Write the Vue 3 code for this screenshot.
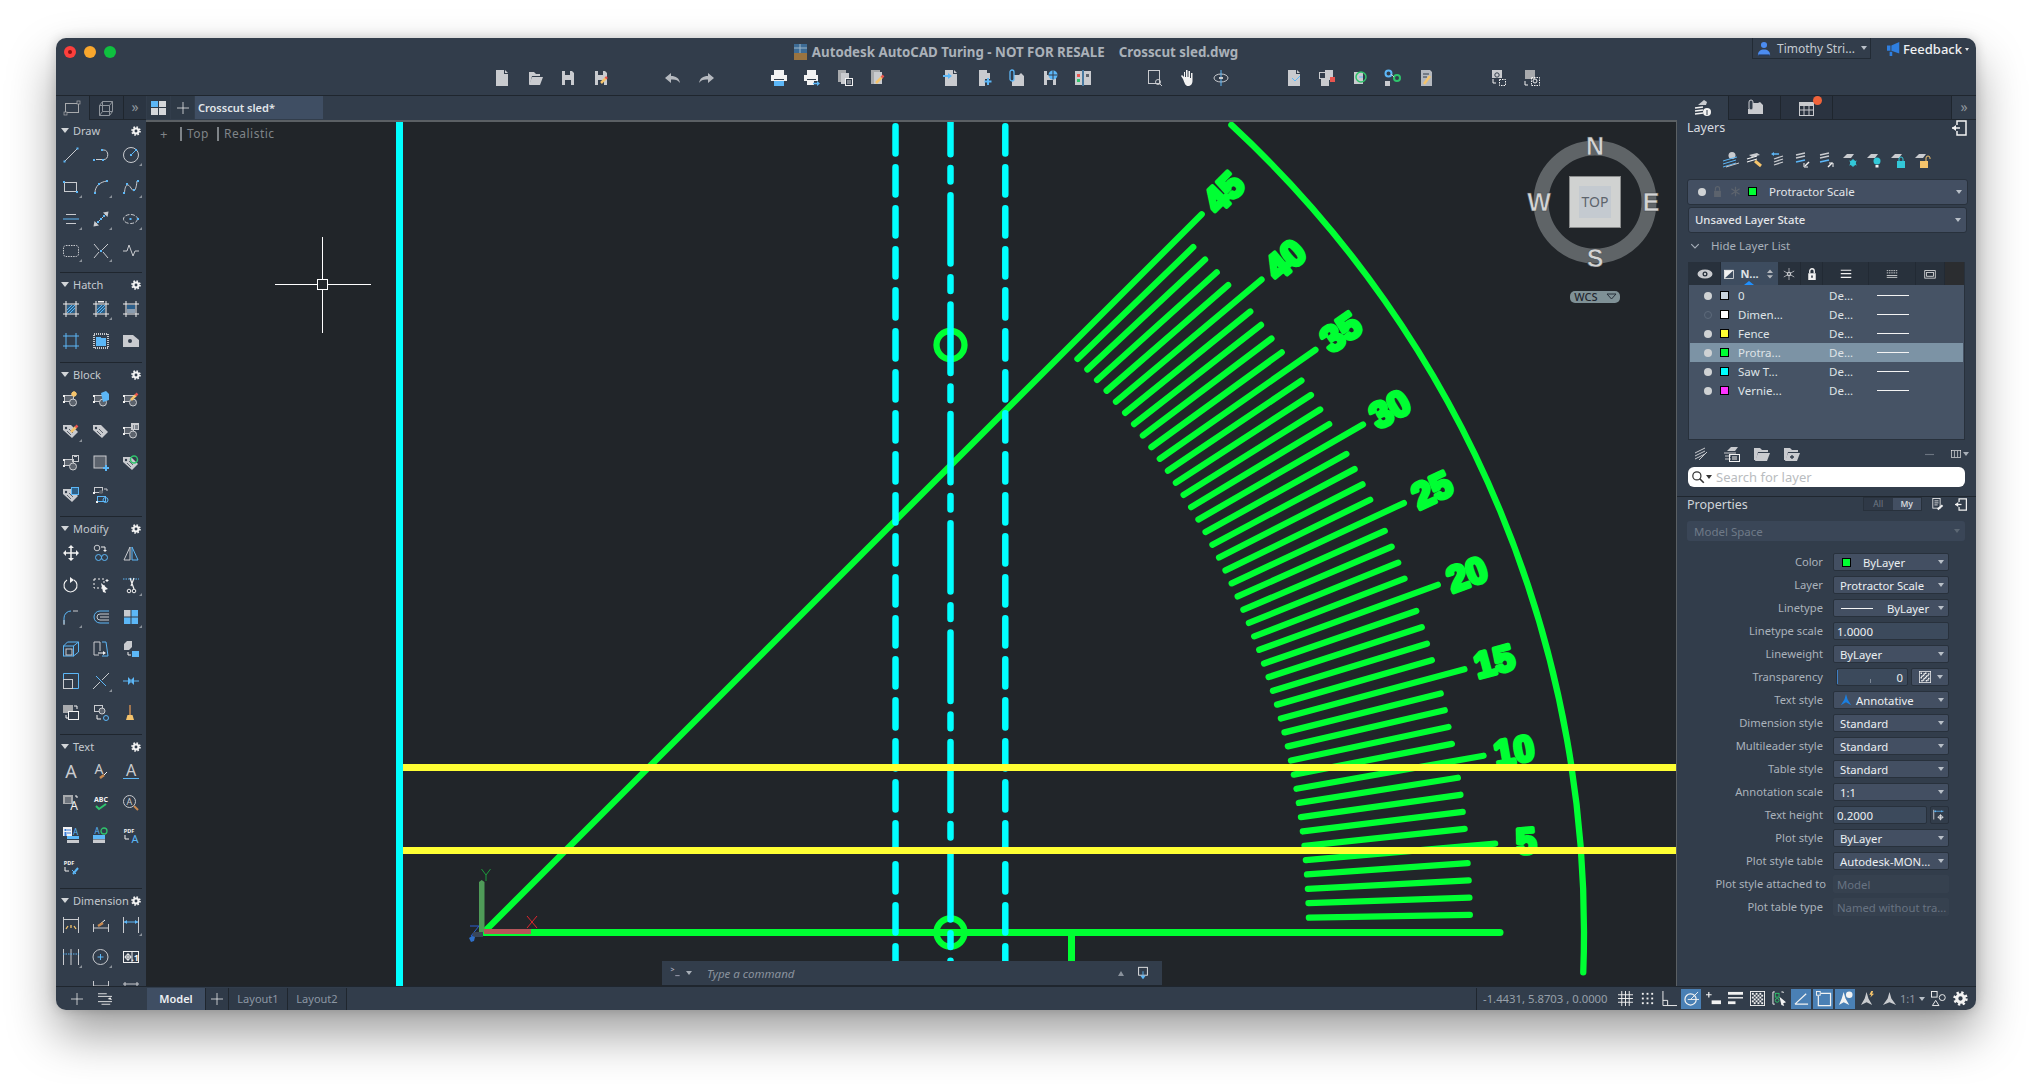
<script setup>
const G = '#c9cbcf', B = '#5cb7f7', W = '#f2f2f2', D = '#323d4b', Y = '#f5c46c', O = '#c98a50', E = '#2fc46c', K = '#5c636d', Rd = '#e8554f'
const FONT = 'Noto Sans, sans-serif'
const p = (d, c = G, w = 1) => `<path d="${d}" fill="none" stroke="${c}" stroke-width="${w}"/>`
const f = (d, c = G) => `<path d="${d}" fill="${c}"/>`
const r = (x, y, w, h, c = G) => `<rect x="${x}" y="${y}" width="${w}" height="${h}" fill="${c}"/>`
const s = (x, y, w, h, c = G, sw = 1, fill = 'none') => `<rect x="${x}" y="${y}" width="${w}" height="${h}" fill="${fill}" stroke="${c}" stroke-width="${sw}"/>`
const o = (x, y, rad, c = G, sw = 1) => `<circle cx="${x}" cy="${y}" r="${rad}" fill="none" stroke="${c}" stroke-width="${sw}"/>`
const c = (x, y, rad, col = G) => `<circle cx="${x}" cy="${y}" r="${rad}" fill="${col}"/>`
const t = (x, y, txt, size, col = G, weight = 400) => `<text x="${x}" y="${y}" font-size="${size}" font-weight="${weight}" font-family="${FONT}" fill="${col}" text-anchor="middle">${txt}</text>`
const dots = (pts, col = B) => pts.map(([x, y]) => r(x - 1, y - 1, 2, 2, col)).join('')
const gear = (col = G) => `<circle cx="8" cy="8" r="6.2" fill="none" stroke="${col}" stroke-width="3" stroke-dasharray="2.4 2.47"/><circle cx="8" cy="8" r="4" fill="none" stroke="${col}" stroke-width="3.4"/>`

const hb = (col = W) => p('M3 0v16M13 0v16M0 3h16M0 13h16', col)
const blk = s(1.5, 4.5, 9, 6, G, 1, K) + dots([[1, 11], [1, 5]], W) + `<circle cx="10" cy="11.5" r="3.5" fill="${K}" stroke="${G}"/>`
const tag = f('M0 2h8l7 7-6 6L0 7z', G) + c(3, 5, 1.2, D) + p('M4 8l4 4M6 6l4 4', K)
const pen = p('M8 9l5-5', Y, 2.5) + p('M12.5 4.5l2-2', Rd, 2.5)
const flop = f('M2 1h10l2 2v12H2z', G) + r(5, 1, 5, 4, D) + r(5, 10, 6, 5, D)
const doc = f('M2 0h8v4h4v12H2z', G) + f('M11 0l3 3h-3z', G)

const I = {
  line: p('M2 14L14 2') + dots([[1.5, 14.5], [14.5, 1.5]]),
  pline: p('M3 12.5h6M10 3h1c5 0 5 9.5 0 9.5') + dots([[1, 13], [10, 13], [9, 3]]),
  circle: o(8, 8, 7.5) + p('M8 8L13 3', B) + dots([[8, 8], [13, 3]]),
  rect: s(1.5, 3.5, 12, 9) + dots([[1, 3], [14, 13]]),
  arc: p('M2 14C2 7 7 3 14 2') + dots([[2, 14], [14, 2], [6, 5]]),
  spline: p('M1.5 14C2 5 5 4 8 9s5 3 6-7') + dots([[1, 14], [4, 5], [11, 11], [15, 2]]),
  xline: p('M3 3.5h10M3 12.5h10') + p('M0 8h16', B),
  darrow: p('M3 13L13 3') + f('M15.5 .5l-1 5.5-4.5-4.5z') + f('M.5 15.5l1-5.5 4.5 4.5z') + dots([[8, 8], [5, 11], [11, 5]]),
  ellipse: `<ellipse cx="7.5" cy="8" rx="7" ry="4.5" fill="none" stroke="${G}" stroke-dasharray="4 1.5"/>` + dots([[7.5, 8], [15, 8]]),
  bound: `<rect x=".5" y="2.5" width="15" height="11" rx="2.5" fill="none" stroke="${G}" stroke-dasharray="1.5 1"/>`,
  xcross: p('M1 1l5 6M10 9l5 6M15 1L9 7M6 9L1 15') + dots([[8, 8]]),
  brk: p('M0 8h4l2-6 4 11 2-5h4'),
  hatch: hb() + r(4, 4, 8, 8, '#2d5f86') + p('M4 9l5-5M4 12l8-8M7 12l5-5', B),
  hatche: hb() + r(4, 4, 8, 8, '#2d5f86') + p('M4 9l5-5M4 12l8-8M7 12l5-5', B) + r(5, 0, 6, 1.5, W),
  grad: hb() + r(4, 4, 8, 4, '#2c5f8b') + r(4, 8, 8, 4, '#8a9caf'),
  bblue: hb(B),
  wipe: `<rect x="1" y="1" width="14" height="14" fill="none" stroke="${G}" stroke-width="2" stroke-dasharray="1 1"/>` + r(3, 5, 10, 8, B) + r(3, 4, 5, 2, B),
  region: f('M0 2h10l6 5v7H0z') + c(7, 8, 2, D),
  bNew: blk + c(11, 3, 2.5, Y) + p('M11 0v6M8 3h6M9 1l4 4M13 1L9 5', Y),
  bBlue: blk + f('M8 2l5-2 3 3v6l-6 2z', B),
  bEdit: blk + pen,
  tEdit: tag + pen,
  tag,
  bAttr: blk + r(8, 0, 8, 7) + r(10, 2.5, 1, 1, D) + r(12, 2.5, 3, 1, D) + r(10, 4.5, 1, 1, D) + r(12, 4.5, 3, 1, D),
  bSave: blk + s(9.5, .5, 6, 6) + r(11, 0, 3, 2),
  bAdd: s(1, 1, 12, 12, G, 1, K) + p('M13 10v6M10 13h6', B, 2),
  tSync: tag + o(11, 4.5, 3.5, E, 1.5),
  tBlue: tag + s(8.5, .5, 7, 7, B, 1, '#2d5f86'),
  bRef: s(1.5, .5, 8, 5) + c(8, 5, 2, K) + p('M11 2h3v2') + s(4.5, 9.5, 8, 5, B) + o(12.5, 13, 2.5, B) + dots([[1, 6], [4, 15]], W),
  move: p('M8 1v14M1 8h14', W, 1.5) + f('M8 0l3 3H5zM8 16l3-3H5zM0 8l3-3v6zM16 8l-3-3v6z', W),
  copy: o(4, 3, 2.8) + p('M8 2h4v3', W) + f('M10 5h4l-2 2z', W) + o(5.5, 12.5, 3, B) + o(11.5, 12.5, 3, B),
  mirror: p('M7 2L1 15h6z') + p('M9 2l6 13H9z', B),
  rotate: p('M11 3a6.5 6.5 0 1 1-7 0', W, 1.1) + f('M7 0v6l4-3z', W),
  scaleSel: `<rect x="1" y="2" width="10" height="9" fill="none" stroke="${W}" stroke-dasharray="2 2"/>` + f('M8 6l7 6-3 1 1 3-3-1z', W) + p('M14 2v3M12.5 3.5h3', W),
  trim: `<path d="M0 2h16" stroke="${B}" stroke-dasharray="1.5 1"/>` + p('M7 1l4 11M11 1L8 9', W, 1.2) + o(6, 14, 1.8, W) + o(11, 14, 1.8, W),
  fillet: p('M1 15V9a7 7 0 0 1 7-7', B) + p('M10 2h5M1 11v5', G),
  offset: p('M16 2H7a6 6 0 0 0 0 12h9', B) + p('M16 5H7a3 3 0 0 0 0 6h9', G) + p('M16 8H7', G),
  array: r(1, 1, 6.5, 6.5) + r(8.5, 1, 6.5, 6.5, B) + r(1, 8.5, 6.5, 6.5, B) + r(8.5, 8.5, 6.5, 6.5, B),
  solid: s(.5, 5, 10, 10, B) + p('M.5 5l4-4h11l-5 4M15.5 1v10l-5 4', B) + s(3, 8, 6, 6, G),
  stretch: p('M6 14H1V1h6v9') + p('M9 1h4l2 14H9', B) + p('M5 12h5', W) + f('M10 10l3 2-3 2z', W),
  lay2: f('M1 3l3-3h5v6l-3 3H1z') + p('M5 11v3h3', W) + r(9, 10, 7, 6, B),
  scale2: s(.5, 6.5, 9, 9) + p('M.5 6V.5h15v15H10', B),
  brk2: p('M0 16L7 9M9 7l7-7') + p('M3 3l10 10', B),
  join: p('M0 8h16', B) + f('M5 4l4 4-4 4zM11 4L7 8l4 4z', B),
  lay3: r(0, 0, 10, 8, '#a8aaad') + s(5.5, 6.5, 10, 8, W, 1, D) + p('M11 1h3v3', W) + p('M3 10v3h2', W),
  bSwap: s(1.5, .5, 8, 6) + c(9, 6, 3, K) + o(9, 6, 3) + p('M4 10v4h4', W) + o(13, 13, 2.5, B),
  purge: p('M7 0v10', O, 1.5) + f('M3 15l1.5-5h5l1.5 5z', Y),
  tA: t(8, 15, 'A', 18, G),
  tA2: t(6, 11, 'A', 14, G) + p('M9 14l5-5', W) + p('M7 15l4-3', O, 2.5),
  tA3: t(8, 13, 'A', 16, G) + r(0, 15, 16, 1, B),
  tImp: r(0, 0, 10, 9, '#a8aaad') + p('M2 3h6M2 5h6M2 7h6', D) + t(11, 15, 'A', 12, W) + p('M12 1h2v2', W),
  spell: t(8, 7, 'ABC', 7, W, 700) + p('M3 11l3 3 7-5', E, 2),
  find: o(6.5, 6.5, 6) + t(6.5, 10, 'A', 9, G) + p('M11 11l4 4', O, 2),
  tList: r(0, 0, 9, 9, W) + dots([[2.5, 3], [2.5, 6], [2.5, 8]], '#3a7bd5') + r(4, 2.5, 4, 1, '#3a7bd5') + r(4, 5.5, 4, 1, '#3a7bd5') + t(12.5, 8, 'A', 8, B) + r(4, 9, 12, 3, B) + r(4, 13, 12, 3),
  tSync2: t(4, 7, 'A', 8, B) + o(11, 4, 3, E, 1.3) + r(0, 8, 12, 4, B) + r(0, 12.5, 12, 3.5),
  pdfA: t(6, 5.5, 'PDF', 5.5, W, 700) + p('M2 8v4h4', W) + t(12, 15.5, 'A', 11, B),
  pdfT: t(6, 5.5, 'PDF', 5.5, W, 700) + p('M2 8v4h4', W) + p('M10 15l5-6', B, 2) + p('M9 11l4 4', B, 1),
  dSmart: p('M.5 0v16M15.5 0v16M0 2.5h16', G) + `<path d="M3 12l2-3M8 11V8M13 12l-2-3" stroke="${Y}" stroke-width="1.3" fill="none"/>`,
  dPen: p('M.5 7v8M15.5 7v8M0 11h16', G) + p('M6 8l6-5', W) + p('M5 9l5-3', O, 2.5),
  dLin: p('M.5 0v16M15.5 0v16', G) + p('M1 5h14', B) + f('M1 5l3-2v4zM15 5l-3-2v4z', B),
  dBase: p('M.5 0v16M8 0v16M15.5 0v16', G) + `<path d="M0 5h16" stroke="${B}" stroke-dasharray="1.5 1"/>`,
  dRad: o(7.5, 8, 7.5) + p('M7.5 5v6M4.5 8h6', B),
  dTol: s(.5, 2.5, 15, 11, W) + p('M9 2v12', W) + t(12, 12, '.1', 9, W, 700) + o(5, 8, 2.5, W) + p('M5 4v8M1.5 8h7', W),
  d7: p('M1 6v10M8 6v4M10 12h2M15 10v2', G),
  d8: p('M.5 0v9M15.5 0v9M0 5h16', G),
  d9: p('M2 1v4M14 1v4M0 3h16') + r(6, 5, 4, 3, Y),
  add: p('M8 0v16M0 8h16', W),
  stack: p('M0 2h10M0 5h16M0 11h16M4 14h10', W) + f('M11 8l3-2 2 3z', W),
  new: doc,
  open: f('M2 2h5l2 2h4v2H5l-2 8H2z', G) + f('M5 7h11l-3 8H2z', G),
  save: flop,
  saveas: flop + p('M8 13l5-5', Y, 2.5) + p('M12.5 8.5l1.5-1.5', Rd, 2.5),
  undo: f('M6 3v3c5 0 8 2 9 7-2-3-5-4-9-3.5V13L0 8z', '#b5b9bf'),
  redo: f('M10 3v3C5 6 2 8 1 13c2-3 5-4 9-3.5V13l6-5z', '#b5b9bf'),
  plot: r(3, 0, 10, 5, W) + r(0, 5, 16, 6, W) + r(3, 11, 10, 5, B) + r(3, 9, 10, 1, D),
  publish: r(3, 0, 9, 5, W) + r(0, 5, 14, 6, W) + r(3, 11, 7, 4, W) + r(3, 9, 9, 1, D) + p('M9 13.5h5', B, 1.5) + f('M13 11l3 2.5-3 2.5z', B),
  batch: r(1, 0, 8, 12, '#a8aaad') + r(4, 3, 8, 11, G) + s(8.5, 8.5, 7, 7, W, 1, D) + p('M10 11h4M10 13h4', G),
  page: r(1, 0, 9, 14, '#a8aaad') + r(4, 2, 8, 12, G) + p('M6 13l6-6', Y, 2.5) + p('M11.5 7.5l2-2', Rd, 2.5),
  docin: doc + p('M0 6h6', B, 2) + f('M5 3l4 3-4 3z', B),
  docadd: f('M3 0h8v3h3v6H9v7H3z') + p('M12 8v7M8.5 11.5h7', B, 2),
  docclip: f('M5 5h5l2-2 3 3v10H3V5z') + `<rect x="1" y="0" width="4" height="11" rx="2" fill="${D}" stroke="${B}" stroke-width="1.3"/>`,
  web: flop + c(11, 5, 4.5, B) + p('M6.5 5h9M11 .5v9', D),
  compare: r(0, 1, 7, 14) + r(9, 1, 7, 14) + r(2, 4, 3, 3, Rd) + r(2, 9, 3, 3, E) + p('M8 0v16', B) + r(11, 4, 3, 3, K),
  zoomw: s(1.5, .5, 11, 13, G) + o(11, 12, 2.5, G) + p('M13 14l2 2'),
  pan: f('M3 9l-2-3 1-1 2 2V2h1v5h1V0h1.5v7h1V1H10v7h1V3h1.5v8c0 3-2 5-4.5 5S5 14 3 9z', W),
  orbit: `<ellipse cx="8" cy="8" rx="7" ry="4" fill="none" stroke="${G}"/>` + p('M8 0v16', B) + r(6, 7, 4, 2, G),
  m1: doc + p('M6 8l3 3 5-5', B),
  m2: s(.5, 2.5, 6, 6) + r(6, 0, 8, 10) + r(2, 9, 8, 7) + r(11, 7, 5, 5, Rd),
  m3: r(2, 2, 9, 12) + o(9, 7, 5, E, 1.5) + p('M7 7h4', B),
  m4: o(3.5, 3.5, 3, B, 2) + o(12, 8, 3, E, 2) + r(0, 11, 5, 5) + p('M6 4l3 3', G),
  m5: f('M3 0h9l2 2v14H3z', '#b5b9bf') + p('M6 14l6-8', Y, 2.5) + p('M5 4h6M5 7h4', D),
  m6: r(1, 0, 10, 8) + o(6, 5, 2.2, D) + p('M2 9v4h3', W) + `<rect x="8.5" y="9.5" width="6" height="6" fill="none" stroke="${W}" stroke-dasharray="1.5 1"/>`,
  m7: r(1, 0, 10, 9, '#a8aaad') + p('M1 11v4h3', W) + `<rect x="7.5" y="7.5" width="8" height="8" fill="none" stroke="${W}" stroke-dasharray="1.5 1"/>` + o(11, 11, 2, W),
  user: c(8, 4, 3.5, '#4c8cf0') + f('M1 16c0-5 3-7 7-7s7 2 7 7z', '#4c8cf0') + p('M1.5 15.5h13', '#111'),
  mega: f('M0 4h4v6H0zM5 4l9-4v13l-9-3zM3 11h3v5H3z', '#2f7fe0'),
  layers1: p('M0 8l8-1M0 11l8-1M0 14l8-1', W, 1.5) + f('M3 5l6-5 3 2-1 3z', G) + c(12, 12, 4, W) + r(11.5, 10, 1, 5, D),
  clipdoc: f('M6 3h5l2-1 3 3v9H1V9h5z') + `<rect x="2" y="0" width="4" height="10" rx="2" fill="${D}" stroke="${G}"/>`,
  cal: r(0, 2, 15, 3) + s(.5, 5.5, 14, 10) + p('M5 6v9M10 6v9M1 10h13'),
  export: p('M5 5V1h9v14H5v-4', W, 1.5) + p('M0 8h8', W, 1.5) + f('M0 8l4-3v6z', W),
  lay1: c(9, 3.5, 3.5) + p('M0 9l10-3 4-1M0 12l13-4M0 15l13-4', B) + p('M3 15l13-4', G),
  lay2t: f('M2 3l8-2 3 2-8 2z') + p('M0 7l10-3M0 10l10-3', W, 1.3) + p('M8 9l6 5', Y, 3),
  lay3t: p('M3 7l9-3M3 10l9-3M3 13l9-3', G, 1.3) + p('M8 2H2', B, 1.5) + f('M0 2l3-2v4z', B),
  lay4t: p('M1 3l9-2M1 6l9-2', G, 1.3) + p('M1 10l9-2', B, 1.5) + p('M10 14l4-4', W, 1.5) + p('M9 11v4h4', W),
  lay5t: p('M1 3l9-2M1 6l9-2', G, 1.3) + p('M1 10l9-2', B, 1.5) + p('M9 15l4-4', W, 1.5) + p('M10 11h4v4', W),
  lay6t: f('M0 6l4-4h7L8 6z') + c(10, 11, 3, '#33c8d8') + p('M10 7v8M6.5 9l7 4M6.5 13l7-4', '#33c8d8'),
  lay7t: f('M0 6l4-4h7L8 6z') + c(10, 9, 3.5, '#33c8d8') + r(8.5, 13, 3, 2.5, W),
  lay8t: f('M0 6l4-4h7L8 6z') + r(6, 9, 8, 7, '#33c8d8') + p('M8 9V7a2 2 0 0 1 4 0v2', '#33c8d8'),
  lay9t: f('M0 6l4-4h7L8 6z') + r(5, 9, 8, 7, Y) + p('M11 9V6a2 2 0 0 1 4 0v1', Y),
  eye: `<ellipse cx="8" cy="8" rx="7.5" ry="4.5" fill="${G}"/>` + c(8, 8, 2.5, '#28313c') + c(8, 8, 1.2, G),
  half: s(2, 3, 12, 11, W, 1) + f('M2 14V3h12z', W),
  updown: f('M8 2l4 4.5H4zM8 14l4-4.5H4z', '#b5b9bf'),
  snow: p('M8 0v16M1 4l14 8M15 4L1 12') + c(8, 8, 3, G) + c(8, 8, 1.2, '#28313c'),
  lock: r(3, 7, 10, 9, W) + p('M5 7V4a3 3 0 0 1 6 0v3', W, 1.8) + r(7, 10, 2, 3, '#28313c'),
  lines3: p('M1 3h14M1 7.5h14M1 12.5h14', W, 1.6),
  lines4: `<path d="M1 3.5h14M1 6.5h14" stroke="${W}" stroke-dasharray="2 1"/>` + p('M1 10h14M1 12.5h14', W),
  plotbox: s(1, 3.5, 14, 10, W) + s(3.5, 6, 9, 5, W),
  lockd: r(3, 7, 10, 9, K) + p('M5 7V4a3 3 0 0 1 6 0v3', K, 1.8),
  snowd: p('M8 1v14M2 4l12 8M14 4L2 12', K, 1.8),
  lsBase: p('M1 7l10-5M1 10l10-5M1 13l10-5') + p('M5 14l8-8', G),
  lsFilter: f('M3 5l4-4h7l-3 4z') + p('M0 7h12M1 10h6M1 13h6') + s(5.5, 8.5, 10, 7, W) + p('M8 11h5M8 13h5', W),
  fopen: f('M0 2h6l2 2h6v2H4L2 14H0z') + f('M4 7h12l-3 8H1z'),
  fstar: f('M0 2h6l2 2h6v2H4L2 14H0z') + f('M4 7h12l-3 8H1z') + p('M8 9v4M6 11h4', D, 1.3),
  minus: r(0, 7, 16, 2, '#6b7480'),
  cols: s(.5, 2.5, 15, 11, W) + p('M5.5 3v10M10.5 3v10', W),
  search: o(6, 6, 5, '#333', 1.5) + p('M9.5 9.5l5 5', '#333', 2),
  pedit: s(1, .5, 9, 12, W) + p('M3 3.5h5M3 6h5M3 8.5h4', W) + p('M7 14l6-5', W, 2.5),
  swatchgrid: s(.5, .5, 15, 15, W) + [2, 5, 8, 11].map(x => [2, 5, 8, 11].map(y => (x + y) % 2 === 0 ? r(x, y, 2, 2, W) : r(x + 1, y + 1, 2, 2, W)).join('')).join(''),
  anno: f('M8 0l2 7 5 8-7-4-7 4 5-8z', '#1b7fe0'),
  theight: p('M1 1v13', W) + p('M1 3h13', B) + f('M2 3l2-1.5v3zM13 3l-2-1.5v3z', B) + o(10, 11, 2.5, W) + p('M10 7v8M6 11h8', W),
  grid: p('M4 0v16M8 0v16M12 0v16M0 4h16M0 8h16M0 12h16', W),
  sDots: [2, 7, 12].map(x => [2, 7, 12].map(y => r(x, y, 2, 2, W)).join('')).join(''),
  sOrtho: p('M1 0v15.5h15M1 10h5v5', W),
  sPolar: o(7, 9, 6, W, 1.3) + p('M7 9l8-8', W) + p('M4 9h12', W),
  sLW: p('M0 4h6M3 1v6', W, 1.3) + r(6, 10, 10, 4, W),
  sLines: r(0, 1, 16, 3, W) + r(0, 6.5, 16, 1.5, W) + r(0, 11, 8, 3, W),
  sCheck: s(.5, .5, 15, 15, W) + Array.from({ length: 6 }, (_, x) => Array.from({ length: 6 }, (_, y) => (x + y) % 2 ? '' : r(2 + x * 2, 2 + y * 2, 2, 2, W)).join('')).join(''),
  sSel: p('M3 1H1v13h2M10 1h2v1', W) + s(3.5, 2.5, 4, 4, E) + o(5.5, 10, 2, E) + f('M8 6l7 6-3 1 1 3-3-1z', W),
  sAng: p('M1 14h14M1 14L13 3', W, 1.3),
  sBox: s(.5, .5, 4, 4, W) + p('M5 2.5h10.5V15.5H2.5V5', W, 1.3),
  sAnno: f('M6 1l2 7 4 7-6-3-5 3 3-7z', W) + c(12, 4, 3.5, W),
  sAnno2: f('M7 1l2 7 4 7-6-3-6 3 4-7z', G) + f('M12 0l-2 4h2l-1 3 4-4h-2l1-3z', Y),
  sAnno3: f('M8 1l2 7 5 7-7-3-7 3 5-7z', G),
  sShapes: s(.5, .5, 6, 6, W) + o(12, 7, 3.2, W) + p('M5 10l3.5 5.5h-7z', W),
  sGear: gear(W),
  gearS: gear(W),
  cmd: t(3, 7, '&gt;', 8, '#aab', 700) + p('M6 11h5', '#aab'),
  cmdPin: s(3, 1.5, 10, 9, W) + p('M8 6v8', B) + f('M5 11h6l-3 4z', B),
  chev: p('M2 5l6 6 6-6', '#a8b0ba', 1.8),
}

const sections = [
  { title: 'Draw', rows: ['line', 'pline', 'circle*', 'rect*', 'arc*', 'spline*', 'xline*', 'darrow*', 'ellipse*', 'bound*', 'xcross*', 'brk'] },
  { title: 'Hatch', rows: ['hatch', 'hatche*', 'grad', 'bblue', 'wipe', 'region'] },
  { title: 'Block', rows: ['bNew', 'bBlue', 'bEdit', 'tEdit*', 'tag', 'bAttr', 'bSave', 'bAdd', 'tSync', 'tBlue', 'bRef'] },
  { title: 'Modify', rows: ['move', 'copy', 'mirror', 'rotate', 'scaleSel', 'trim*', 'fillet*', 'offset', 'array*', 'solid', 'stretch', 'lay2', 'scale2', 'brk2*', 'join', 'lay3', 'bSwap', 'purge'] },
  { title: 'Text', rows: ['tA', 'tA2', 'tA3', 'tImp', 'spell', 'find', 'tList', 'tSync2', 'pdfA', 'pdfT'] },
  { title: 'Dimension', rows: ['dSmart', 'dPen', 'dLin*', 'dBase*', 'dRad*', 'dTol', 'd7', 'd8', 'd9'] },
]
const toolGroups = [
  ['new', 'open', 'save', 'saveas'], ['undo', 'redo'], ['plot', 'publish', 'batch', 'page'],
  ['docin', 'docadd', 'docclip', 'web', 'compare'], ['zoomw', 'pan', 'orbit'], ['m1', 'm2', 'm3', 'm4', 'm5'], ['m6', 'm7'],
]
const layerTools = ['lay1', 'lay2t', 'lay3t', 'lay4t', 'lay5t', 'lay6t', 'lay7t', 'lay8t', 'lay9t']
const layers = [
  { n: '0', c: '#c8d3dc' }, { n: 'Dimen...', c: '#ffffff', off: true }, { n: 'Fence', c: '#ffff33' },
  { n: 'Protra...', c: '#00ff33', sel: true }, { n: 'Saw T...', c: '#00ffff' }, { n: 'Vernie...', c: '#ff33ff' },
]
const propRows = [
  { l: 'Color', k: 'color', v: 'ByLayer' }, { l: 'Layer', k: 'sel', v: 'Protractor Scale' },
  { l: 'Linetype', k: 'ltype', v: 'ByLayer' }, { l: 'Linetype scale', k: 'input', v: '1.0000' },
  { l: 'Lineweight', k: 'sel', v: 'ByLayer' }, { l: 'Transparency', k: 'trans', v: '0' },
  { l: 'Text style', k: 'tstyle', v: 'Annotative' }, { l: 'Dimension style', k: 'sel', v: 'Standard' },
  { l: 'Multileader style', k: 'sel', v: 'Standard' }, { l: 'Table style', k: 'sel', v: 'Standard' },
  { l: 'Annotation scale', k: 'sel', v: '1:1' }, { l: 'Text height', k: 'theight', v: '0.2000' },
  { l: 'Plot style', k: 'sel', v: 'ByLayer' }, { l: 'Plot style table', k: 'sel', v: 'Autodesk-MON...' },
  { l: 'Plot style attached to', k: 'dis', v: 'Model', over: true }, { l: 'Plot table type', k: 'dis', v: 'Named without tra...' },
]
const statusIcons = [
  { n: 'grid' }, { n: 'sDots' }, { n: 'sOrtho' }, { n: 'sPolar', on: true }, { n: 'sLW' }, { n: 'sLines' },
  { n: 'sCheck' }, { n: 'sSel' }, { n: 'sAng', on: true }, { n: 'sBox', on: true }, { n: 'sAnno', on: true },
  { n: 'sAnno2' }, { n: 'sAnno3' },
]
const ORIGIN = { x: 484, y: 932 }
const rad = a => (a * Math.PI) / 180
const polar = (a, d) => ({ x: ORIGIN.x + d * Math.cos(rad(a)), y: ORIGIN.y - d * Math.sin(rad(a)) })
const ticks = Array.from({ length: 44 }, (_, i) => {
  const a = i + 1
  const from = polar(a, 825), to = polar(a, a % 5 === 0 ? 1015 : 986)
  return { a, x1: from.x, y1: from.y, x2: to.x, y2: to.y }
})
const diag = polar(45, 1015)
const labels = [5, 10, 15, 20, 25, 30, 35, 40, 45].map(a => ({ a, ...polar(a, 1046) }))
const arcStart = polar(47.2, 1100), arcEnd = polar(-2.1, 1100)
const arcPath = `M${arcStart.x} ${arcStart.y}A1100 1100 0 0 1 ${arcEnd.x} ${arcEnd.y}`
</script>

<template>
  <div class="page">
    <div class="window">
      <header class="titlebar">
        <div class="title-row">
          <div class="lights">
            <span class="light red"><i></i></span><span class="light amber"></span><span class="light green"></span>
          </div>
          <div class="title">
            <svg class="app-logo" viewBox="0 0 13 16"><rect width="13" height="9" fill="#3d6c96"/><rect y="9" width="13" height="7" fill="#9a7440"/><path d="M6 0v9M0 4h13" stroke="#9fb7c9" fill="none"/></svg>
            <span>Autodesk AutoCAD Turing - NOT FOR RESALE</span><span class="title-file">Crosscut sled.dwg</span>
          </div>
          <div class="account">
            <div class="user">
              <svg class="ico" viewBox="0 0 16 16" v-html="I.user"></svg>
              <span class="user-name">Timothy Stri...</span><i class="caret"></i>
            </div>
            <div class="feedback">
              <svg class="ico" viewBox="0 0 16 16" v-html="I.mega"></svg>
              <span>Feedback</span><i class="caret tiny"></i>
            </div>
          </div>
        </div>
        <div class="toolbar">
          <div v-for="(g, gi) in toolGroups" :key="gi" class="tool-group">
            <span v-for="n in g" :key="n" class="tool"><svg class="ico" viewBox="0 0 16 16" v-html="I[n]"></svg></span>
          </div>
        </div>
      </header>

      <div class="body">
        <aside class="palette">
          <div class="pal-tabs">
            <span class="pal-tab on"><svg class="ico" viewBox="0 0 16 16"><rect x="1.5" y="3.5" width="13" height="9" fill="none" stroke="#a8aaad"/><rect x="0" y="12" width="3" height="3" fill="#323d4b" stroke="#a8aaad" stroke-width=".7"/><rect x="13" y="1" width="3" height="3" fill="#323d4b" stroke="#a8aaad" stroke-width=".7"/></svg></span>
            <span class="pal-tab"><svg class="ico" viewBox="0 0 16 16"><path d="M1.5 5.5h10v10h-10zM1.5 5.5l3-4h10v10l-3 4M11.5 5.5l3-4M4.500 1.5v10h10M1.5 15.5l3-4" fill="none" stroke="#8f959c"/></svg></span>
            <span class="pal-tab more">»</span>
          </div>
          <section v-for="(sec, si) in sections" :key="sec.title" class="pal-sec" :class="{ first: si === 0 }">
            <div class="pal-head">
              <i class="tri"></i><span class="pal-title">{{ sec.title }}</span>
              <svg class="pal-gear" viewBox="0 0 16 16" v-html="I.gearS"></svg>
            </div>
            <div class="pal-grid">
              <span v-for="n in sec.rows" :key="n" class="pal-cell">
                <svg class="ico" viewBox="0 0 16 16" v-html="I[n.replace('*', '')]"></svg>
                <i v-if="n.endsWith('*')" class="fly"></i>
              </span>
            </div>
          </section>
        </aside>

        <main class="center">
          <div class="doc-tabs">
            <span class="doc-ctl">
              <span class="squares"><i class="sq-b"></i><i></i><i></i><i></i></span>
            </span>
            <span class="doc-ctl"><svg class="add-ico" viewBox="0 0 16 16" v-html="I.add"></svg></span>
            <span class="doc-tab">Crosscut sled*</span>
          </div>
          <div class="canvas">
            <svg class="drawing" viewBox="146 122 1530 864" width="1530" height="864">
              <g stroke="#00ff33" stroke-width="6.3" stroke-linecap="round" fill="none">
                <line v-for="l in ticks" :key="l.a" :x1="l.x1" :y1="l.y1" :x2="l.x2" :y2="l.y2" />
                <line :x1="ORIGIN.x" :y1="ORIGIN.y" :x2="diag.x" :y2="diag.y" />
                <path :d="arcPath" />
                <line x1="484" y1="932.5" x2="1500" y2="932.5" stroke-width="7" />
                <line x1="1071.5" y1="936" x2="1071.5" y2="965" stroke-width="7" stroke-linecap="butt" />
                <circle cx="950.5" cy="345" r="14" />
                <circle cx="950.5" cy="932.5" r="14" />
              </g>
              <g fill="#00ff33" stroke="#00ff33" stroke-width="4" stroke-linejoin="round" class="deg">
                <text v-for="l in labels" :key="l.a" :transform="`translate(${l.x} ${l.y}) rotate(${-l.a})`" text-anchor="middle" dominant-baseline="central">{{ l.a }}</text>
              </g>
              <g stroke="#00ffff" stroke-linecap="round" fill="none">
                <line x1="399.5" y1="122" x2="399.5" y2="986" stroke-width="7" stroke-linecap="butt" />
                <line x1="895.5" y1="122" x2="895.5" y2="986" stroke-width="6.5" stroke-dasharray="27.33 13.67" stroke-dashoffset="-4.25" />
                <line x1="1005.3" y1="122" x2="1005.3" y2="986" stroke-width="6.5" stroke-dasharray="27.33 13.67" stroke-dashoffset="-4.25" />
                <line x1="950.5" y1="122" x2="950.5" y2="986" stroke-width="6.5" stroke-dasharray="68.33 13.67 13.67 13.67" stroke-dashoffset="-73.25" />
              </g>
              <g fill="#ffff33">
                <rect x="403" y="764" width="1274" height="7" />
                <rect x="403" y="847" width="1274" height="7" />
              </g>
              <g class="ucs">
                <rect x="479" y="882" width="5.5" height="50" fill="#4f9b58" />
                <path d="M479 882l2.7-2 2.8 2z" fill="#4f9b58" />
                <path d="M481.5 869l4.5 6 4.5-6M486 875v6" stroke="#1c9a3c" fill="none" />
                <rect x="484" y="929" width="47" height="5" fill="#b5555a" />
                <path d="M527 916l10 12M537 916l-10 12" stroke="#e0262e" fill="none" />
                <path d="M470 926h9l-8 10h7" stroke="#2a5fd0" fill="none" />
                <rect x="473" y="932" width="10" height="5" fill="#3a4658" />
                <path d="M469 938l3-2 3 1-1 4-3 1z" fill="#2f6fc8" />
              </g>
              <g stroke="#ffffff" fill="none">
                <path d="M322.5 237v42M322.5 289v44M275 284.5h42M328 284.5h43" />
                <rect x="317.5" y="279.5" width="10" height="10" />
              </g>
              <g class="cube">
                <circle cx="1595" cy="202" r="54" fill="none" stroke="#5f6467" stroke-width="15" />
                <rect x="1569.5" y="176.5" width="51" height="51" fill="#d0d2d1" stroke="#8a8c8c" />
                <rect x="1579" y="186" width="32" height="32" fill="#c4cad0" />
                <text x="1595" y="207" text-anchor="middle" class="top-face">TOP</text>
                <text x="1595" y="155" text-anchor="middle" class="dir">N</text>
                <text x="1595" y="267" text-anchor="middle" class="dir">S</text>
                <text x="1539" y="211" text-anchor="middle" class="dir">W</text>
                <text x="1651" y="211" text-anchor="middle" class="dir">E</text>
                <rect x="1570" y="291" width="50" height="12" rx="5" fill="#7f9196" />
                <text x="1586" y="301" text-anchor="middle" class="wcs">WCS</text>
                <path d="M1607 294h9l-4.5 5z" fill="none" stroke="#27303a" />
              </g>
            </svg>
            <div class="vp-label">
              <span class="vp-plus">+</span><span class="vp-sep">Top</span><span class="vp-sep">Realistic</span>
            </div>
            <div class="cmdline">
              <svg class="ico cmd-ico" viewBox="0 0 16 16" v-html="I.cmd"></svg><i class="caret micro"></i>
              <span class="cmd-text">Type a command</span>
              <i class="caret up"></i>
              <svg class="ico cmd-pin" viewBox="0 0 16 16" v-html="I.cmdPin"></svg>
            </div>
          </div>
        </main>

        <aside class="panel">
          <div class="panel-tabs">
            <span class="ptab on"><svg class="ico" viewBox="0 0 16 16" v-html="I.layers1"></svg></span>
            <span class="ptab"><svg class="ico" viewBox="0 0 16 16" v-html="I.clipdoc"></svg></span>
            <span class="ptab"><svg class="ico" viewBox="0 0 16 16" v-html="I.cal"></svg><i class="notif"></i></span>
            <span class="ptab fill"></span>
            <span class="ptab end">»</span>
          </div>
          <div class="p-head">
            <span>Layers</span>
            <svg class="ico" viewBox="0 0 16 16" v-html="I.export"></svg>
          </div>
          <div class="layer-tools">
            <span v-for="n in layerTools" :key="n" class="ltool"><svg class="ico" viewBox="0 0 16 16" v-html="I[n]"></svg></span>
          </div>
          <div class="dd dd-layer">
            <i class="ldot"></i>
            <svg class="mini" viewBox="0 0 16 16" v-html="I.lockd"></svg>
            <svg class="mini" viewBox="0 0 16 16" v-html="I.snowd"></svg>
            <i class="swatch" style="background:#00ff33"></i>
            <span class="dd-text">Protractor Scale</span><i class="caret"></i>
          </div>
          <div class="dd dd-state"><span class="dd-text">Unsaved Layer State</span><i class="caret"></i></div>
          <div class="hide-row">
            <svg class="chev" viewBox="0 0 16 16" v-html="I.chev"></svg><span>Hide Layer List</span>
          </div>
          <div class="ltable">
            <div class="lhead">
              <span class="lh dark"><svg class="ico" viewBox="0 0 16 16" v-html="I.eye"></svg></span>
              <span class="lh name">
                <svg class="sm" viewBox="0 0 16 16" v-html="I.half"></svg><b>N...</b>
                <svg class="sm" viewBox="0 0 16 16" v-html="I.updown"></svg><i class="sort"></i>
              </span>
              <span class="lh dark"><svg class="sm" viewBox="0 0 16 16" v-html="I.snow"></svg></span>
              <span class="lh dark"><svg class="sm" viewBox="0 0 16 16" v-html="I.lock"></svg></span>
              <span class="lh dark"><svg class="sm" viewBox="0 0 16 16" v-html="I.lines3"></svg></span>
              <span class="lh dark"><svg class="sm" viewBox="0 0 16 16" v-html="I.lines4"></svg></span>
              <span class="lh dark"><svg class="sm" viewBox="0 0 16 16" v-html="I.plotbox"></svg></span>
              <span class="lh blank"></span>
            </div>
            <div class="lbody">
              <div v-for="l in layers" :key="l.n" class="lrow" :class="{ sel: l.sel }">
                <i class="ldot" :class="{ off: l.off }"></i>
                <i class="swatch" :style="{ background: l.c }"></i>
                <span class="lname">{{ l.n }}</span>
                <span class="lde">De...</span>
                <i class="lline"></i>
              </div>
            </div>
          </div>
          <div class="lfoot">
            <span class="lf"><svg class="ico" viewBox="0 0 16 16" v-html="I.lsBase"></svg></span>
            <span class="lf"><svg class="ico" viewBox="0 0 16 16" v-html="I.lsFilter"></svg></span>
            <span class="lf"><svg class="ico" viewBox="0 0 16 16" v-html="I.fopen"></svg></span>
            <span class="lf"><svg class="ico" viewBox="0 0 16 16" v-html="I.fstar"></svg></span>
            <span class="lf-gap"></span>
            <svg class="minus" viewBox="0 0 16 16" v-html="I.minus"></svg>
            <svg class="colsi" viewBox="0 0 16 16" v-html="I.cols"></svg><i class="caret micro"></i>
          </div>
          <div class="search">
            <svg class="ico" viewBox="0 0 16 16" v-html="I.search"></svg><i class="caret micro dark"></i>
            <span>Search for layer</span>
          </div>
          <div class="props-head">
            <span class="props-title">Properties</span>
            <div class="toggle"><span class="tg">All</span><span class="tg on">My</span></div>
            <svg class="ico" viewBox="0 0 16 16" v-html="I.pedit"></svg>
            <svg class="ico" viewBox="0 0 16 16" v-html="I.export"></svg>
          </div>
          <div class="dd dd-space"><span class="dd-text">Model Space</span><i class="caret dim"></i></div>
          <div class="props">
            <div v-for="row in propRows" :key="row.l" class="prop">
              <span class="plabel" :class="{ over: row.over }">{{ row.l }}</span>
              <div class="pval-wrap">
                <template v-if="row.k === 'trans'">
                  <div class="pval slider"><i class="tick-a"></i><i class="tick-b"></i><span class="slider-v">{{ row.v }}</span></div>
                  <div class="pval trans-c"><svg class="sm" viewBox="0 0 16 16" v-html="I.swatchgrid"></svg><i class="caret"></i></div>
                </template>
                <template v-else-if="row.k === 'theight'">
                  <div class="pval input grow">{{ row.v }}</div>
                  <div class="pval th-btn"><svg class="sm" viewBox="0 0 16 16" v-html="I.theight"></svg></div>
                </template>
                <div v-else class="pval grow" :class="{ input: row.k === 'input', dis: row.k === 'dis' }">
                  <i v-if="row.k === 'color'" class="swatch sw-color" style="background:#00ff33"></i>
                  <i v-if="row.k === 'ltype'" class="lline lt"></i>
                  <svg v-if="row.k === 'tstyle'" class="anno" viewBox="0 0 16 16" v-html="I.anno"></svg>
                  <span class="pv-text">{{ row.v }}</span>
                  <i v-if="row.k !== 'input' && row.k !== 'dis'" class="caret"></i>
                </div>
              </div>
            </div>
          </div>
        </aside>
      </div>

      <footer class="status">
        <div class="st-left">
          <svg class="add-ico" viewBox="0 0 16 16" v-html="I.add"></svg>
          <svg class="ico" viewBox="0 0 16 16" v-html="I.stack"></svg>
        </div>
        <span class="ltab on">Model</span>
        <span class="ltab plus"><svg class="add-ico" viewBox="0 0 16 16" v-html="I.add"></svg></span>
        <span class="ltab">Layout1</span>
        <span class="ltab">Layout2</span>
        <span class="st-space"></span>
        <span class="coords">-1.4431, 5.8703 , 0.0000</span>
        <span v-for="st in statusIcons" :key="st.n" class="st-ico" :class="{ on: st.on }"><svg class="ico" viewBox="0 0 16 16" v-html="I[st.n]"></svg></span>
        <span class="st-scale">1:1<i class="caret"></i></span>
        <span class="st-ico"><svg class="ico" viewBox="0 0 16 16" v-html="I.sShapes"></svg></span>
        <span class="st-ico"><svg class="ico" viewBox="0 0 16 16" v-html="I.sGear"></svg></span>
      </footer>
    </div>
  </div>
</template>

<style>
html, body { margin: 0; background: #fff; }
</style>

<style scoped>
.page { width: 2032px; height: 1084px; box-sizing: border-box; padding: 38px 56px 74px; background: #fff; font-family: "Noto Sans", sans-serif; overflow: hidden; }
.window { height: 972px; display: flex; flex-direction: column; background: #323d4b; border-radius: 10px; overflow: hidden; box-shadow: 0 24px 48px rgba(0,0,0,.38), 0 0 12px rgba(0,0,0,.18); }
.ico { width: 16px; height: 16px; display: block; overflow: visible; flex: none; }
.sm { width: 12px; height: 12px; display: block; flex: none; }
i { display: block; font-style: normal; }

.caret { width: 0; height: 0; border-left: 3.5px solid transparent; border-right: 3.5px solid transparent; border-top: 4px solid #b9c0c8; flex: none; }
.caret.tiny { border-left-width: 2.5px; border-right-width: 2.5px; border-top-width: 3px; border-top-color: #e8e8e8; margin-left: 1px; }
.caret.micro { border-left-width: 3px; border-right-width: 3px; border-top-width: 4px; border-top-color: #a8afb8; }
.caret.micro.dark { border-top-color: #333; }
.caret.up { border-top: 0; border-bottom: 5px solid #8a929c; }
.caret.dim { border-top-color: #5c6774; }

.titlebar { height: 58px; flex: none; border-bottom: 1px solid #1f262e; box-sizing: border-box; }
.title-row { height: 28px; display: grid; grid-template-columns: 1fr auto 1fr; align-items: start; }
.lights { display: flex; gap: 8px; padding: 8px 0 0 8px; }
.light { width: 12px; height: 12px; border-radius: 50%; display: flex; align-items: center; justify-content: center; }
.light.red { background: #fc3f3c; } .light.red i { width: 4px; height: 4px; border-radius: 50%; background: #8a0f10; }
.light.amber { background: #f9a72d; } .light.green { background: #0fc03f; }
.title { display: flex; align-items: center; gap: 5px; height: 28px; font-size: 13.3px; font-weight: 700; color: #aab1b9; white-space: nowrap; }
.app-logo { width: 13px; height: 16px; }
.title-file { margin-left: 9px; }
.account { display: flex; justify-content: flex-end; align-items: flex-start; padding-right: 7px; }
.user { display: flex; align-items: center; gap: 6px; width: 119px; height: 21px; box-sizing: border-box; padding: 0 4px; border: 1px solid #222b35; border-top: 0; background: #323d4b; font-size: 12px; color: #c5cbd2; margin-right: 16px; }
.user .ico { width: 14px; height: 15px; }
.user-name { flex: 1; white-space: nowrap; }
.feedback { display: flex; align-items: center; gap: 2px; height: 22px; font-size: 13px; font-weight: 500; color: #eef0f2; }
.feedback .ico { width: 14px; height: 14px; }

.toolbar { display: flex; height: 24px; padding-left: 429px; gap: 39.7px; }
.tool-group { display: flex; }
.tool { width: 33px; height: 24px; display: flex; align-items: center; justify-content: center; }

.body { flex: 1; display: flex; min-height: 0; }
.palette { width: 90px; flex: none; overflow: hidden; }
.pal-tabs { display: flex; height: 24px; background: #1f262e; gap: 1px; }
.pal-tab { display: flex; align-items: center; justify-content: center; background: #2b3542; width: 34px; height: 23px; }
.pal-tab.on { background: #323d4b; height: 24px; width: 33px; }
.pal-tab.more { width: 22px; color: #8f959c; font-size: 14px; padding-bottom: 2px; box-sizing: border-box; }
.pal-sec { margin: 0 4px; padding-top: 4px; padding-bottom: 5px; border-top: 1px solid #1f262e; }
.pal-sec.first { border-top: 0; padding-top: 3px; }
.pal-head { height: 16px; display: flex; align-items: center; padding: 0 0 1px 1px; box-sizing: border-box; }
.tri { width: 0; height: 0; border-left: 4px solid transparent; border-right: 4px solid transparent; border-top: 5px solid #d2d5d8; margin-right: 4px; }
.pal-title { flex: 1; font-size: 11px; color: #c4c9cf; line-height: 15px; }
.pal-gear { width: 10px; height: 10px; margin-right: 1px; }
.pal-grid { display: grid; grid-template-columns: repeat(3, 30px); grid-auto-rows: 32px; margin-left: -4px; }
.pal-cell { position: relative; display: flex; align-items: center; justify-content: center; }
.fly { position: absolute; right: 4px; bottom: 5px; width: 0; height: 0; border-left: 3px solid transparent; border-bottom: 3px solid #8b929a; }

.center { flex: 1; min-width: 0; display: flex; flex-direction: column; }
.doc-tabs { height: 24px; flex: none; display: flex; gap: 1px; padding-left: 1px; }
.doc-ctl { width: 23px; height: 23px; display: flex; align-items: center; justify-content: center; background: #2e3946; }
.squares { display: grid; grid-template-columns: 7px 7px; grid-auto-rows: 6.5px; gap: 1px; }
.squares i { background: #d5d7da; } .squares .sq-b { background: #5cb7f7; }
.doc-tab { width: 128px; height: 23px; background: #3f4e63; font-size: 11px; font-weight: 600; color: #e2e6ea; display: flex; align-items: center; padding-left: 3px; box-sizing: border-box; white-space: nowrap; }
.canvas { flex: 1; position: relative; background: #212529; border-top: 2px solid #5b6064; border-right: 1px solid #5b6064; overflow: hidden; }
.drawing { position: absolute; left: 0; top: 0; display: block; }
.deg text { font-family: "Liberation Sans", sans-serif; font-weight: 700; font-size: 36px; }
.top-face { font-family: "Noto Sans", sans-serif; font-size: 14px; fill: #5d646c; }
.dir { font-family: "Liberation Sans", sans-serif; font-weight: 700; font-size: 25px; fill: #d3d4d4; stroke: #3c4044; stroke-width: .5; }
.wcs { font-family: "Noto Sans", sans-serif; font-size: 11px; font-weight: 500; fill: #1f262e; }
.vp-label { position: absolute; left: 14px; top: 4px; display: flex; align-items: center; height: 16px; font-size: 12px; letter-spacing: .5px; color: #7f8488; }
.vp-plus { width: 20px; font-size: 13px; }
.vp-sep { border-left: 2px solid #7f8488; padding-left: 5px; margin-right: 8px; line-height: 14px; }
.cmdline { position: absolute; left: 516px; bottom: 0; width: 500px; height: 25px; background: #323d4b; display: flex; align-items: center; box-sizing: border-box; padding: 0 12px 0 8px; border-bottom: 1px solid #1f262e; }
.cmd-ico { width: 14px; height: 14px; }
.cmd-text { margin-left: 15px; flex: 1; font-size: 11.5px; font-style: italic; color: #8a939e; }
.cmd-pin { margin-left: 12px; width: 14px; height: 14px; }
.cmdline .caret.micro { margin-left: 2px; }

.panel { width: 299px; flex: none; display: flex; flex-direction: column; color: #d4d8dc; }
.panel-tabs { height: 24px; display: flex; flex: none; background: #1f262e; gap: 1px; }
.ptab { position: relative; width: 51px; height: 23px; background: #2a3340; display: flex; align-items: center; justify-content: center; }
.ptab.on { background: #323d4b; height: 24px; }
.ptab.fill { flex: 1; }
.ptab.end { width: 24px; background: #323d4b; color: #8f959c; font-size: 14px; padding-bottom: 2px; box-sizing: border-box; }
.notif { position: absolute; left: 32px; top: 0; width: 9px; height: 9px; border-radius: 50%; background: #f0633a; }
.p-head { height: 16px; padding: 0 8px 1px 10px; box-sizing: border-box; display: flex; align-items: center; justify-content: space-between; font-size: 12.5px; color: #d8dce0; flex: none; }
.layer-tools { display: flex; padding-left: 42px; margin-top: 14px; height: 20px; flex: none; align-items: center; }
.ltool { width: 24px; display: flex; justify-content: center; }
.dd { display: flex; align-items: center; box-sizing: border-box; background: #434f62; border: 1px solid #28313c; border-radius: 3px; font-size: 11.5px; flex: none; }
.dd-text { flex: 1; white-space: nowrap; }
.dd-layer { height: 26px; margin: 9px 8px 0 10px; padding: 0 5px 1px 10px; color: #e3e6ea; }
.dd-layer .mini { width: 11px; height: 11px; margin-left: 6px; }
.dd-layer .mini + .mini { margin-left: 7px; }
.dd-layer .swatch { margin: 0 12px 0 7px; }
.dd-state { height: 26px; margin: 2px 9px 0 11px; padding: 0 5px 1px 6px; color: #e3e6ea; font-size: 11.3px; font-weight: 500; }
.hide-row { display: flex; align-items: center; height: 18px; margin-top: 4px; padding: 0 0 1px 13px; box-sizing: border-box; font-size: 11.5px; color: #a8b0ba; flex: none; }
.chev { width: 10px; height: 10px; margin-right: 11px; }
.ltable { margin: 7px 11px 0; height: 178px; flex: none; border: 1px solid #28313c; border-top: 0; box-sizing: border-box; display: flex; flex-direction: column; }
.lhead { height: 23px; flex: none; display: grid; grid-template-columns: 32px 57px 23px 22px 46px 47px 29px 1fr; background: #28313c; }
.lh { display: flex; align-items: center; justify-content: center; border-right: 1px solid #222a34; }
.lh.name { position: relative; background: #3d4c5f; gap: 5px; font-size: 11px; color: #dfe3e7; border: 0; }
.lh.name b { font-weight: 700; }
.lh.blank { background: #2b2d30; border: 0; }
.sort { position: absolute; left: 23px; bottom: 0; width: 0; height: 0; border-left: 5px solid transparent; border-right: 5px solid transparent; border-bottom: 4px solid #1e90ff; }
.lbody { flex: 1; background: #465365; padding: 1px 1px 0; }
.lrow { height: 19px; display: grid; grid-template-columns: 30px 18px 91px 48px 32px; align-items: center; font-size: 11.5px; line-height: 17px; color: #dfe3e7; }
.lrow.sel { background: #7c93a5; }
.ldot { width: 8px; height: 8px; border-radius: 50%; background: #cfd2d4; }
.lrow .ldot { margin-left: 14px; }
.ldot.off { background: transparent; border: 1px solid #5d6a7b; width: 6px; height: 6px; }
.swatch { width: 7px; height: 7px; border: 1px solid #000; flex: none; }
.lline { height: 1px; background: #f4f4f4; width: 32px; }
.lfoot { height: 20px; margin-top: 4px; padding: 0 7px 0 10px; display: flex; align-items: center; flex: none; }
.lf { width: 30px; display: flex; justify-content: center; }
.lf-gap { flex: 1; }
.minus { width: 9px; height: 9px; margin-right: 17px; }
.colsi { width: 10px; height: 10px; margin-right: 2px; }
.search { margin: 3px 11px 0; height: 20px; border-radius: 6px; background: #fff; display: flex; align-items: center; padding-left: 4px; flex: none; box-sizing: border-box; font-size: 13px; color: #b9bcc0; }
.search .ico { width: 13px; height: 13px; }
.search .caret { margin: 0 4px 0 1px; }
.props-head { margin-top: 9px; height: 15px; box-sizing: border-box; border-top: 1px solid #1f262e; display: flex; align-items: center; padding: 0 8px 0 10px; flex: none; }
.props-title { flex: 1; font-size: 12.5px; color: #cfd4d9; }
.toggle { display: flex; height: 14px; margin-right: 10px; font-size: 8.5px; background: #28313c; border: 1px solid #28313c; box-sizing: border-box; width: 59px; }
.tg { flex: 1; text-align: center; color: #707a86; line-height: 12px; background: #2f3947; }
.tg.on { color: #d4d8dc; background: #434f62; font-weight: 600; }
.props-head .ico { width: 13px; height: 13px; }
.props-head .ico + .ico { margin-left: 10px; }
.dd-space { height: 20px; margin: 10px 11px 0 10px; padding: 0 5px 0 7px; background: #3a4657; border: 0; color: #6f7a88; }
.props { margin-top: 12px; display: flex; flex-direction: column; gap: 5px; }
.prop { display: grid; grid-template-columns: 146px 116px; column-gap: 10px; height: 18px; align-items: center; }
.plabel { text-align: right; font-size: 11.2px; line-height: 16px; color: #aab2bb; white-space: nowrap; }
.plabel.over { margin-right: -3px; }
.pval-wrap { display: flex; gap: 3px; height: 18px; }
.pval { box-sizing: border-box; height: 18px; background: #434f62; border: 1px solid #28313c; border-radius: 2px; display: flex; align-items: center; font-size: 11.3px; color: #eceff2; padding: 0 4px 0 6px; white-space: nowrap; }
.grow { flex: 1; min-width: 0; }
.pv-text { flex: 1; }
.pval.input { background: #3c4a5c; padding-left: 3px; font-size: 11.5px; }
.pval.dis { background: #36414f; border-color: #36414f; color: #687382; padding-left: 3px; }
.sw-color { margin: 0 12px 0 2px; }
.lt { margin: 0 14px 0 1px; }
.anno { width: 12px; height: 12px; margin-right: 4px; }
.slider { width: 72px; margin-left: 3px; position: relative; justify-content: flex-end; background: #3c4a5c; padding-right: 4px; }
.tick-a { position: absolute; left: 0; top: 1px; bottom: 1px; width: 1px; background: #3f7fc4; }
.tick-b { position: absolute; left: 33px; bottom: 2px; width: 1px; height: 4px; background: #7d8896; }
.trans-c { width: 38px; gap: 6px; padding: 0 5px 0 7px; }
.th-btn { width: 19px; padding: 0 2px; background: #323d4b; }

.status { height: 24px; flex: none; display: flex; align-items: center; border-top: 1px solid #1f262e; box-sizing: border-box; color: #9aa3ad; }
.st-left { width: 91px; display: flex; align-items: center; flex: none; padding-left: 15px; box-sizing: border-box; gap: 15px; }
.add-ico { width: 12px; height: 12px; display: block; }
.st-left .ico { width: 14px; height: 14px; }
.ltab { height: 22px; width: 59px; display: flex; align-items: center; justify-content: center; font-size: 11px; color: #8c97a4; background: #2f3a48; border-right: 1px solid #1f262e; box-sizing: border-box; flex: none; }
.ltab.on { color: #eef0f2; font-weight: 600; background: #3f4e63; }
.ltab.plus { width: 23px; }
.st-space { flex: 1; }
.coords { width: 138px; box-sizing: border-box; height: 22px; line-height: 21px; border-left: 1px solid #1f262e; font-size: 11.3px; color: #97a0aa; white-space: nowrap; padding-left: 6px; flex: none; }
.st-ico { width: 22px; height: 20px; display: flex; align-items: center; justify-content: center; flex: none; }
.st-ico.on { background: #4a80b5; background-clip: content-box; padding: 0 1px; box-sizing: border-box; }
.st-ico .ico { width: 15px; height: 15px; }
.st-scale { width: 27px; font-size: 11px; color: #8f98a3; display: flex; align-items: center; gap: 3px; flex: none; box-sizing: border-box; }
.status > .st-ico:last-child { margin-right: 5px; }
</style>
